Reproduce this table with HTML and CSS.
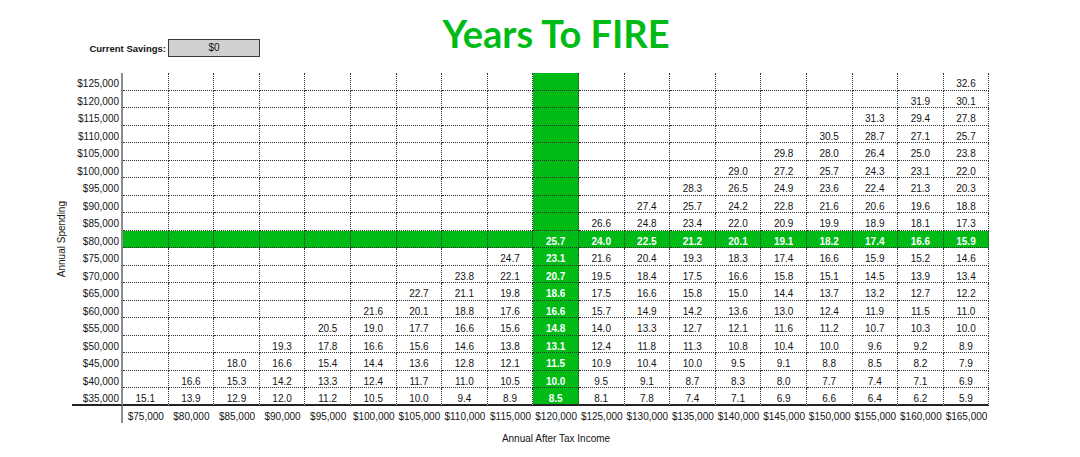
FILE: index.html
```html
<!DOCTYPE html>
<html lang="en">
<head>
<meta charset="utf-8">
<title>Years To FIRE</title>
<link rel="stylesheet" href="styles.css">
</head>
<body>
<div class="header">
  <h1 class="title">Years To FIRE</h1>
  <div class="savings">
    <span class="savings-label">Current Savings:</span>
    <span class="savings-box">$0</span>
  </div>
</div>

<div class="chart">
  <div class="ytitle">Annual Spending</div>

  <div class="row"><span class="ylab">$125,000</span><span></span><span></span><span></span><span></span><span></span><span></span><span></span><span></span><span></span><span class="g"></span><span></span><span></span><span></span><span></span><span></span><span></span><span></span><span></span><span>32.6</span></div>
  <div class="row"><span class="ylab">$120,000</span><span></span><span></span><span></span><span></span><span></span><span></span><span></span><span></span><span></span><span class="g"></span><span></span><span></span><span></span><span></span><span></span><span></span><span></span><span>31.9</span><span>30.1</span></div>
  <div class="row"><span class="ylab">$115,000</span><span></span><span></span><span></span><span></span><span></span><span></span><span></span><span></span><span></span><span class="g"></span><span></span><span></span><span></span><span></span><span></span><span></span><span>31.3</span><span>29.4</span><span>27.8</span></div>
  <div class="row"><span class="ylab">$110,000</span><span></span><span></span><span></span><span></span><span></span><span></span><span></span><span></span><span></span><span class="g"></span><span></span><span></span><span></span><span></span><span></span><span>30.5</span><span>28.7</span><span>27.1</span><span>25.7</span></div>
  <div class="row"><span class="ylab">$105,000</span><span></span><span></span><span></span><span></span><span></span><span></span><span></span><span></span><span></span><span class="g"></span><span></span><span></span><span></span><span></span><span>29.8</span><span>28.0</span><span>26.4</span><span>25.0</span><span>23.8</span></div>
  <div class="row"><span class="ylab">$100,000</span><span></span><span></span><span></span><span></span><span></span><span></span><span></span><span></span><span></span><span class="g"></span><span></span><span></span><span></span><span>29.0</span><span>27.2</span><span>25.7</span><span>24.3</span><span>23.1</span><span>22.0</span></div>
  <div class="row"><span class="ylab">$95,000</span><span></span><span></span><span></span><span></span><span></span><span></span><span></span><span></span><span></span><span class="g"></span><span></span><span></span><span>28.3</span><span>26.5</span><span>24.9</span><span>23.6</span><span>22.4</span><span>21.3</span><span>20.3</span></div>
  <div class="row"><span class="ylab">$90,000</span><span></span><span></span><span></span><span></span><span></span><span></span><span></span><span></span><span></span><span class="g"></span><span></span><span>27.4</span><span>25.7</span><span>24.2</span><span>22.8</span><span>21.6</span><span>20.6</span><span>19.6</span><span>18.8</span></div>
  <div class="row"><span class="ylab">$85,000</span><span></span><span></span><span></span><span></span><span></span><span></span><span></span><span></span><span></span><span class="g"></span><span>26.6</span><span>24.8</span><span>23.4</span><span>22.0</span><span>20.9</span><span>19.9</span><span>18.9</span><span>18.1</span><span>17.3</span></div>
  <div class="row hl"><span class="ylab">$80,000</span><span></span><span></span><span></span><span></span><span></span><span></span><span></span><span></span><span></span><span class="g">25.7</span><span>24.0</span><span>22.5</span><span>21.2</span><span>20.1</span><span>19.1</span><span>18.2</span><span>17.4</span><span>16.6</span><span>15.9</span></div>
  <div class="row"><span class="ylab">$75,000</span><span></span><span></span><span></span><span></span><span></span><span></span><span></span><span></span><span>24.7</span><span class="g">23.1</span><span>21.6</span><span>20.4</span><span>19.3</span><span>18.3</span><span>17.4</span><span>16.6</span><span>15.9</span><span>15.2</span><span>14.6</span></div>
  <div class="row"><span class="ylab">$70,000</span><span></span><span></span><span></span><span></span><span></span><span></span><span></span><span>23.8</span><span>22.1</span><span class="g">20.7</span><span>19.5</span><span>18.4</span><span>17.5</span><span>16.6</span><span>15.8</span><span>15.1</span><span>14.5</span><span>13.9</span><span>13.4</span></div>
  <div class="row"><span class="ylab">$65,000</span><span></span><span></span><span></span><span></span><span></span><span></span><span>22.7</span><span>21.1</span><span>19.8</span><span class="g">18.6</span><span>17.5</span><span>16.6</span><span>15.8</span><span>15.0</span><span>14.4</span><span>13.7</span><span>13.2</span><span>12.7</span><span>12.2</span></div>
  <div class="row"><span class="ylab">$60,000</span><span></span><span></span><span></span><span></span><span></span><span>21.6</span><span>20.1</span><span>18.8</span><span>17.6</span><span class="g">16.6</span><span>15.7</span><span>14.9</span><span>14.2</span><span>13.6</span><span>13.0</span><span>12.4</span><span>11.9</span><span>11.5</span><span>11.0</span></div>
  <div class="row"><span class="ylab">$55,000</span><span></span><span></span><span></span><span></span><span>20.5</span><span>19.0</span><span>17.7</span><span>16.6</span><span>15.6</span><span class="g">14.8</span><span>14.0</span><span>13.3</span><span>12.7</span><span>12.1</span><span>11.6</span><span>11.2</span><span>10.7</span><span>10.3</span><span>10.0</span></div>
  <div class="row"><span class="ylab">$50,000</span><span></span><span></span><span></span><span>19.3</span><span>17.8</span><span>16.6</span><span>15.6</span><span>14.6</span><span>13.8</span><span class="g">13.1</span><span>12.4</span><span>11.8</span><span>11.3</span><span>10.8</span><span>10.4</span><span>10.0</span><span>9.6</span><span>9.2</span><span>8.9</span></div>
  <div class="row"><span class="ylab">$45,000</span><span></span><span></span><span>18.0</span><span>16.6</span><span>15.4</span><span>14.4</span><span>13.6</span><span>12.8</span><span>12.1</span><span class="g">11.5</span><span>10.9</span><span>10.4</span><span>10.0</span><span>9.5</span><span>9.1</span><span>8.8</span><span>8.5</span><span>8.2</span><span>7.9</span></div>
  <div class="row"><span class="ylab">$40,000</span><span></span><span>16.6</span><span>15.3</span><span>14.2</span><span>13.3</span><span>12.4</span><span>11.7</span><span>11.0</span><span>10.5</span><span class="g">10.0</span><span>9.5</span><span>9.1</span><span>8.7</span><span>8.3</span><span>8.0</span><span>7.7</span><span>7.4</span><span>7.1</span><span>6.9</span></div>
  <div class="row bottom"><span class="ylab">$35,000</span><span>15.1</span><span>13.9</span><span>12.9</span><span>12.0</span><span>11.2</span><span>10.5</span><span>10.0</span><span>9.4</span><span>8.9</span><span class="g">8.5</span><span>8.1</span><span>7.8</span><span>7.4</span><span>7.1</span><span>6.9</span><span>6.6</span><span>6.4</span><span>6.2</span><span>5.9</span></div>

  <div class="xrow"><span class="corner"></span><span class="ylab"></span><span>$75,000</span><span>$80,000</span><span>$85,000</span><span>$90,000</span><span>$95,000</span><span>$100,000</span><span>$105,000</span><span>$110,000</span><span>$115,000</span><span>$120,000</span><span>$125,000</span><span>$130,000</span><span>$135,000</span><span>$140,000</span><span>$145,000</span><span>$150,000</span><span>$155,000</span><span>$160,000</span><span>$165,000</span></div>
</div>

<div class="xtitle">Annual After Tax Income</div>
</body>
</html>
```

FILE: styles.css
```css
* {
  box-sizing: border-box;
}

body {
  margin: 0;
  background: #ffffff;
  color: #141414;
  font-family: "Liberation Sans", Arial, sans-serif;
  font-size: 10px;
}

.header {
  display: grid;
  grid-template-columns: 123px 866px;
  height: 73px;
}

.title {
  grid-column: 2;
  grid-row: 1;
  align-self: start;
  margin: 14px 0 0;
  text-align: center;
  font-family: Lato, "Open Sans", sans-serif;
  font-weight: 700;
  font-size: 38px;
  line-height: 38px;
  color: #00bb16;
}

.savings {
  grid-column: 1 / 3;
  grid-row: 1;
  align-self: start;
  display: flex;
  align-items: center;
  margin-top: 39px;
  height: 18px;
}

.savings-label {
  width: 166px;
  text-align: right;
  font-weight: 700;
  font-size: 9.5px;
}

.savings-box {
  margin-left: 2px;
  width: 92px;
  height: 18px;
  background: #d0d0d0;
  border: 1px solid #3a3a3a;
  text-align: center;
  line-height: 16px;
}

.chart {
  display: grid;
  grid-template-columns: 72px 51px repeat(19, 45.6px);
  grid-template-rows: repeat(19, 17.5px) 17px;
}

.row,
.xrow {
  display: contents;
}

.ytitle {
  grid-column: 1;
  grid-row: 1 / 20;
  align-self: center;
  justify-self: end;
  margin-right: 4px;
  writing-mode: vertical-rl;
  transform: rotate(180deg);
  line-height: 12px;
}

.row > span {
  padding-top: 5px;
  line-height: 12px;
  text-align: center;
  white-space: nowrap;
  border-right: 1px dotted #333;
  border-bottom: 1px dotted #333;
}

.row > .ylab,
.xrow > .ylab {
  padding: 5px 2px 0 0;
  text-align: right;
  border-bottom: none;
  border-right: 2px solid #8c8c8c;
}

.row > .g,
.hl > span:not(.ylab) {
  background: #00bb16;
  color: #ffffff;
  font-weight: 700;
}

.bottom > span,
.bottom > .ylab {
  border-bottom: 2px solid #222;
}

.xrow > span {
  padding-top: 5px;
  line-height: 12px;
  text-align: center;
  white-space: nowrap;
}

.xtitle {
  margin: 10px 0 0 123px;
  width: 866px;
  text-align: center;
  line-height: 12px;
}
```
